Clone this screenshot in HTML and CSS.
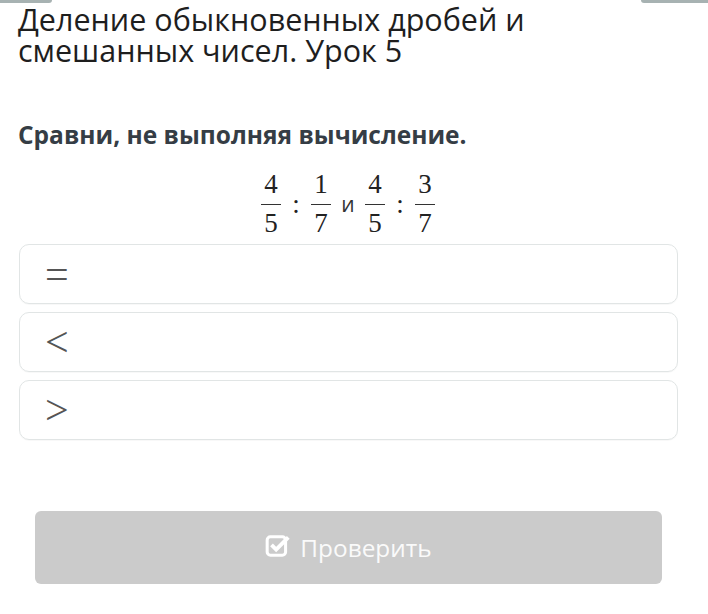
FILE: index.html
```html
<!DOCTYPE html>
<html lang="ru">
<head>
<meta charset="utf-8">
<link rel="stylesheet" href="styles.css">
</head>
<body>
<div class="topbar">
  <span class="tab tab-left"></span>
  <span class="tab tab-right"></span>
</div>
<main class="page">
  <h1 class="title">Деление обыкновенных дробей и<br>смешанных чисел. Урок 5</h1>
  <p class="question">Сравни, не выполняя вычисление.</p>
  <div class="formula">
    <span class="frac"><span class="num">4</span><span class="den">5</span></span>
    <span class="op">:</span>
    <span class="frac"><span class="num">1</span><span class="den">7</span></span>
    <span class="word">и</span>
    <span class="frac"><span class="num">4</span><span class="den">5</span></span>
    <span class="op">:</span>
    <span class="frac"><span class="num">3</span><span class="den">7</span></span>
  </div>
  <div class="options">
    <div class="option"><span class="sym">=</span></div>
    <div class="option"><span class="sym">&lt;</span></div>
    <div class="option"><span class="sym">&gt;</span></div>
  </div>
  <div class="actions">
    <button class="check">
      <svg class="check-icon" viewBox="0 0 24 24" width="26" height="26">
        <rect x="2" y="3.5" width="17" height="17" rx="3" fill="none" stroke="#fff" stroke-width="2.8"/>
        <path d="M6 11 L10.3 15.3 L21.5 4" fill="none" stroke="#fff" stroke-width="3.6" stroke-linejoin="miter"/>
      </svg>
      <span>Проверить</span>
    </button>
  </div>
</main>
</body>
</html>
```
FILE: styles.css
```css
* { box-sizing: border-box; }
html, body { margin: 0; padding: 0; background: #fff; }
body { font-family: "Open Sans", "Noto Sans", sans-serif; color: #222; }

.topbar { height: 3px; display: flex; justify-content: space-between; }
.tab { display: block; height: 3px; background: #a7b2b2; }
.tab-left { width: 52px; border-radius: 0 0 3px 0; }
.tab-right { width: 67px; border-radius: 0 0 0 3px; }

.page { padding: 0 30px 0 18px; }

.title {
  margin: 1px 0 0 0;
  font-weight: 400;
  font-size: 30.5px;
  line-height: 31px;
  color: #1e1e1e;
}

.question {
  margin: 55px 0 0 0;
  font-weight: 700;
  font-size: 24.5px;
  line-height: 28px;
  color: #353d45;
}

.formula {
  margin-top: 21px;
  display: flex;
  justify-content: center;
  align-items: center;
  font-family: "Liberation Serif", "DejaVu Serif", serif;
  font-size: 27px;
  color: #222;
}
.frac { display: inline-flex; flex-direction: column; align-items: stretch; }
.num { line-height: 28px; border-bottom: 1.5px solid #333; padding: 0 3.5px 6px; text-align: center; }
.den { line-height: 28px; margin-top: 4px; text-align: center; }
.op { padding: 0 11px; font-size: 27px; line-height: 28px; }
.word { font-family: "Open Sans", sans-serif; font-size: 21px; padding: 0 10px; color: #333; line-height: 28px; }

.options { margin-top: 7px; margin-left: 1px; display: flex; flex-direction: column; gap: 8px; }
.option {
  height: 60px;
  border: 1px solid #e1e5e5;
  border-radius: 10px;
  display: flex;
  align-items: center;
  padding-left: 25px;
  box-shadow: 0 1px 1px rgba(0,0,0,0.03);
}
.sym { font-family: "Liberation Serif", "DejaVu Serif", serif; font-size: 42px; color: #555; line-height: 1; }

.actions { margin-top: 71px; padding-left: 17px; padding-right: 16px; }
.check {
  width: 100%;
  height: 73px;
  background: #cbcbcb;
  border: none;
  border-radius: 6px;
  color: #fafafa;
  font-family: "Open Sans", sans-serif;
  font-size: 24.4px;
  display: flex;
  align-items: center;
  justify-content: center;
  gap: 9px;
  padding: 0;
}
.check-icon { display: block; margin-top: -3px; }
```
